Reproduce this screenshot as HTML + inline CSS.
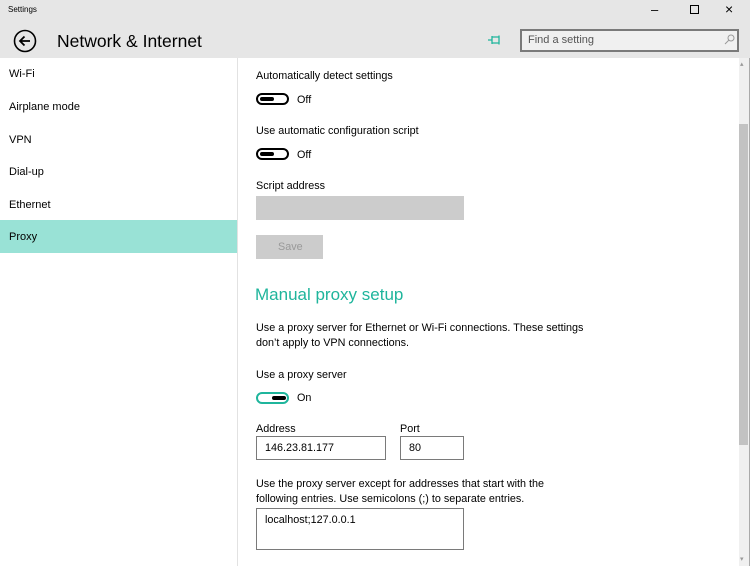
<!DOCTYPE html>
<html><head><meta charset="utf-8"><style>
*{margin:0;padding:0;box-sizing:border-box}
body{width:750px;height:566px;overflow:hidden;background:#fff;font-family:"Liberation Sans",sans-serif;color:#000;position:relative;font-size:10.8px}
.a{position:absolute;white-space:nowrap}
.hdr{position:absolute;left:0;top:0;width:750px;height:58px;background:#e6e6e6}
.nav{font-size:11px;left:9px}
.tog{position:absolute;width:33px;height:12px;border:2px solid #000;border-radius:7px}
.tog i{position:absolute;top:2px;width:14px;height:4px;background:#000;border-radius:2px}
.box{position:absolute;border:1px solid #7a7a7a;background:#fff}
</style></head><body>
<div class="hdr"></div>
<div class="a" style="left:8px;top:5px;font-size:8px">Settings</div>
<div class="a" style="left:651px;top:2px;font-size:13px">–</div>
<div class="a" style="left:690px;top:5px;width:9px;height:9px;border:1px solid #000"></div>
<div class="a" style="left:725px;top:1px;font-size:14px">×</div>
<svg class="a" style="left:13px;top:29px" width="24" height="24" viewBox="0 0 24 24"><circle cx="12" cy="12" r="10.5" fill="none" stroke="#000" stroke-width="1.6"/><path d="M17 12H7M11.5 7.5L7 12l4.5 4.5" fill="none" stroke="#000" stroke-width="1.8"/></svg>
<div class="a" style="left:57px;top:31px;font-size:17.5px">Network &amp; Internet</div>
<svg class="a" style="left:487px;top:34px" width="16" height="12" viewBox="0 0 16 12"><path d="M1 6h4M5 2v8M5 3h7v6H5M12 1.5v9" fill="none" stroke="#1fb59c" stroke-width="1.3"/></svg>
<div class="a" style="left:520px;top:29px;width:219px;height:23px;border:2px solid #7a7a7a;background:#f0f0f0"></div>
<div class="a" style="left:528px;top:34px;font-size:11px;color:#555">Find a setting</div>
<svg class="a" style="left:724px;top:34px" width="11" height="11" viewBox="0 0 11 11"><circle cx="7" cy="4" r="3" fill="none" stroke="#999"/><path d="M5 6L1 10" stroke="#999"/></svg>

<div class="a" style="left:237px;top:58px;width:1px;height:508px;background:#e2e2e2"></div>
<div class="a" style="left:0;top:220px;width:237px;height:33px;background:#99e2d6"></div>
<div class="a nav" style="top:68px">Wi-Fi</div>
<div class="a nav" style="top:101px">Airplane mode</div>
<div class="a nav" style="top:134px">VPN</div>
<div class="a nav" style="top:166px">Dial-up</div>
<div class="a nav" style="top:199px">Ethernet</div>
<div class="a nav" style="top:231px">Proxy</div>

<div class="a" style="left:739px;top:58px;width:10px;height:508px;background:#f0f0f0"></div>
<div class="a" style="left:739px;top:124px;width:9px;height:321px;background:#c2c2c2"></div>
<div class="a" style="left:749px;top:58px;width:1px;height:508px;background:#aaa"></div>
<div class="a" style="left:740px;top:60px;font-size:7px;color:#999">▴</div>
<div class="a" style="left:740px;top:555px;font-size:7px;color:#999">▾</div>

<div class="a" style="left:256px;top:70px">Automatically detect settings</div>
<div class="tog" style="left:256px;top:93px"><i style="left:2px"></i></div>
<div class="a" style="left:297px;top:94px">Off</div>
<div class="a" style="left:256px;top:125px">Use automatic configuration script</div>
<div class="tog" style="left:256px;top:148px"><i style="left:2px"></i></div>
<div class="a" style="left:297px;top:149px">Off</div>
<div class="a" style="left:256px;top:180px">Script address</div>
<div class="a" style="left:256px;top:196px;width:208px;height:24px;background:#cccccc"></div>
<div class="a" style="left:256px;top:235px;width:67px;height:24px;background:#cccccc"></div>
<div class="a" style="left:278px;top:241px;color:#999">Save</div>
<div class="a" style="left:255px;top:285px;font-size:17px;color:#1fb59c">Manual proxy setup</div>
<div class="a" style="left:256px;top:321px;line-height:15px">Use a proxy server for Ethernet or Wi-Fi connections. These settings<br>don’t apply to VPN connections.</div>
<div class="a" style="left:256px;top:369px">Use a proxy server</div>
<div class="tog" style="left:256px;top:392px;border-color:#1fb59c"><i style="left:14px"></i></div>
<div class="a" style="left:297px;top:392px">On</div>
<div class="a" style="left:256px;top:423px">Address</div>
<div class="a" style="left:400px;top:423px">Port</div>
<div class="box" style="left:256px;top:436px;width:130px;height:24px"></div>
<div class="a" style="left:265px;top:442px">146.23.81.177</div>
<div class="box" style="left:400px;top:436px;width:64px;height:24px"></div>
<div class="a" style="left:409px;top:442px">80</div>
<div class="a" style="left:256px;top:477px;line-height:15px">Use the proxy server except for addresses that start with the<br>following entries. Use semicolons (;) to separate entries.</div>
<div class="box" style="left:256px;top:508px;width:208px;height:42px"></div>
<div class="a" style="left:265px;top:514px">localhost;127.0.0.1</div>
</body></html>
